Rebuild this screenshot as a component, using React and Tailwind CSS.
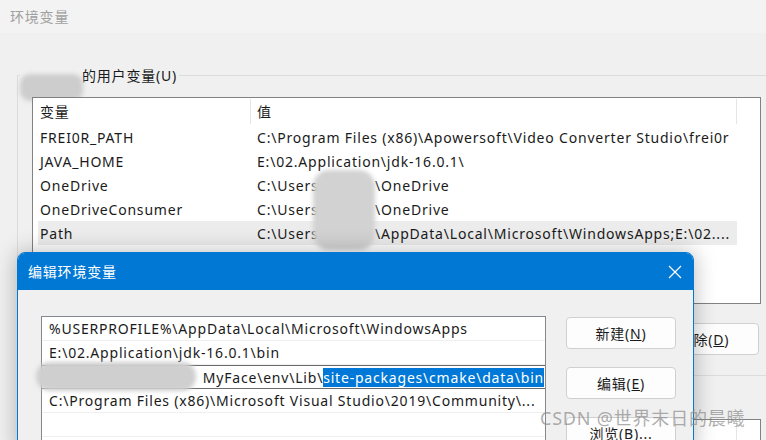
import React from 'react'

const bgRows = [
  { name: 'FREI0R_PATH', value: 'C:\\Program Files (x86)\\Apowersoft\\Video Converter Studio\\frei0r' },
  { name: 'JAVA_HOME', value: 'E:\\02.Application\\jdk-16.0.1\\' },
  { name: 'OneDrive', user: true, value: '\\OneDrive' },
  { name: 'OneDriveConsumer', user: true, value: '\\OneDrive' },
  { name: 'Path', user: true, value: '\\AppData\\Local\\Microsoft\\WindowsApps;E:\\02....', selected: true },
]

function Blob({ className }) {
  return <div className={`absolute bg-[#cdcdcd] blur-[2px] ${className}`} />
}

function Button({ children, className = '' }) {
  return (
    <div
      className={`flex items-center justify-center rounded-[4px] border border-[#d0d0d0] bg-[#fdfdfd] text-[14px] text-[#1a1a1a] ${className}`}
    >
      {children}
    </div>
  )
}

function CloseIcon() {
  return (
    <svg width="14" height="14" viewBox="0 0 14 14" fill="none">
      <path d="M1 1L13 13M13 1L1 13" stroke="white" strokeWidth="1.2" />
    </svg>
  )
}

export default function App() {
  return (
    <div className="relative w-[766px] h-[440px] overflow-hidden bg-[#f0f0f0] font-['Noto_Sans','Noto_Sans_CJK_SC',sans-serif] text-[14px] tracking-[0.8px] text-[#1a1a1a]">
      {/* background window: 环境变量 */}
      <div className="h-[33px] bg-[#f3f3f3] flex items-center pl-[10px] text-[#a0a0a0]">环境变量</div>

      <fieldset className="relative mt-[29px] ml-[17px] w-[760px] border-t border-l border-b border-[#dcdcdc] pl-[14px] pb-[20px]">
        <legend className="ml-[-12px] h-[26px] flex items-center pr-[2px]">
          <span className="inline-block w-[62px]" />
          的用户变量(U)
        </legend>
        <Blob className="left-[2px] top-[-14px] w-[63px] h-[27px] rounded-[10px]" />

        {/* user variable table */}
        <div className="relative mt-[9px] w-[729px] h-[207px] border border-[#828282] bg-white">
          <div className="flex h-[27px] items-center">
            <div className="w-[217px] pl-[7px]">变量</div>
            <div className="w-[487px] h-[25px] flex items-center border-l border-r border-[#e5e5e5] pl-[6px]">值</div>
          </div>
          <div className="w-[704px] pl-[5px]">
            {bgRows.map((r) => (
              <div
                key={r.name}
                className={`flex h-[24px] items-center whitespace-nowrap ${r.selected ? 'bg-[#ececec]' : ''}`}
              >
                <div className="w-[212px] pl-[2px]">{r.name}</div>
                <div className="flex pl-[7px] overflow-hidden">
                  {r.user && <span className="inline-block w-[118px] overflow-hidden">C:\Users\</span>}
                  <span>{r.value}</span>
                </div>
              </div>
            ))}
          </div>
          <div className="absolute left-[280px] top-[72px] w-[62px] h-[80px] rounded-[16px] bg-[#d2d2d2] blur-[2px]" />
        </div>

        <div className="mt-[19px] flex justify-end w-[727px] gap-[10px]">
          <Button className="w-[110px] h-[32px]">新建(<u>W</u>)...</Button>
          <Button className="w-[110px] h-[32px]">编辑(<u>E</u>)...</Button>
          <Button className="w-[110px] h-[32px]">删除(<u>D</u>)</Button>
        </div>
      </fieldset>

      {/* system variable table, mostly under the dialog */}
      <div className="ml-[32px] mt-[43px] w-[729px] h-[60px] border border-[#828282] bg-white flex">
        <div className="w-[704px] h-[25px] border-r border-[#e5e5e5]" />
      </div>

      {/* dialog: 编辑环境变量 */}
      <div className="absolute left-[17px] top-[252px] w-[677px] h-[200px] rounded-t-[8px] border border-[#0078d4] bg-[#f0f0f0] shadow-[0_0_22px_rgba(0,0,0,0.28)] overflow-hidden">
        <div className="h-[37px] bg-[#0078d4] flex items-center justify-between pl-[10px] pr-[11px] text-white">
          <span>编辑环境变量</span>
          <CloseIcon />
        </div>
        <div className="flex pl-[23px] pt-[26px] gap-[20px]">
          <div className="relative w-[505px] h-[140px] border border-[#828790] bg-white whitespace-nowrap">
            <div className="h-[24px] flex items-center pl-[7px] border-b border-[#efefef]">
              %USERPROFILE%\AppData\Local\Microsoft\WindowsApps
            </div>
            <div className="h-[24px] flex items-center pl-[7px] border-b border-[#efefef]">
              E:\02.Application\jdk-16.0.1\bin
            </div>
            <div className="h-[24px] flex items-center justify-end pr-[1px] border-y border-[#6b6b6b] overflow-hidden">
              <span>MyFace\env\Lib\</span>
              <span className="bg-[#0078d7] text-white leading-[19px]">site-packages\cmake\data\bin</span>
            </div>
            <div className="h-[24px] flex items-center pl-[7px] border-b border-[#efefef]">
              C:\Program Files (x86)\Microsoft Visual Studio\2019\Community\...
            </div>
            <div className="h-[24px] border-b border-[#efefef]" />
            <div className="absolute left-[-6px] top-[45px] w-[160px] h-[29px] rounded-[14px] bg-[#cfcfcf] blur-[2px]" />
          </div>
          <div className="flex flex-col gap-[18px] pt-[1px]">
            <Button className="w-[110px] h-[32px]">新建(<u>N</u>)</Button>
            <Button className="w-[110px] h-[32px]">编辑(<u>E</u>)</Button>
            <Button className="w-[110px] h-[32px]">浏览(<u>B</u>)...</Button>
          </div>
        </div>
      </div>

      {/* watermark */}
      <div className="absolute left-[540px] top-[406px] text-[18px] leading-[24px] text-[#8a8a8a]/70 whitespace-nowrap">
        CSDN @世界末日的晨曦
      </div>
    </div>
  )
}
